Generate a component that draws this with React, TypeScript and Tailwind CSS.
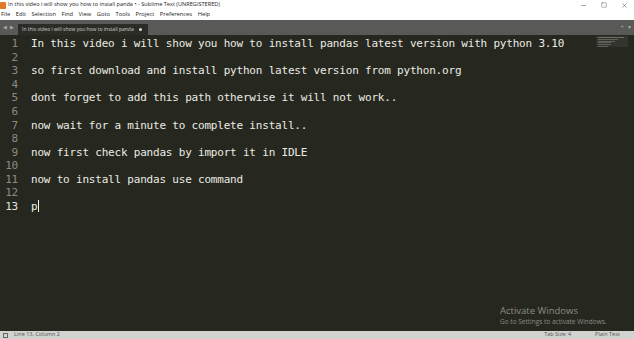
import { Minus, Square, X } from "lucide-react";

const lines = [
  "In this video i will show you how to install pandas latest version with python 3.10",
  "",
  "so first download and install python latest version from python.org",
  "",
  "dont forget to add this path otherwise it will not work..",
  "",
  "now wait for a minute to complete install..",
  "",
  "now first check pandas by import it in IDLE",
  "",
  "now to install pandas use command",
  "",
  "p",
];

const menu = ["File", "Edit", "Selection", "Find", "View", "Goto", "Tools", "Project", "Preferences", "Help"];

const ui = { fontFamily: '"Open Sans", "Noto Sans", sans-serif' };
const mono = { fontFamily: '"DejaVu Sans Mono", "Liberation Mono", monospace' };

export default function App() {
  return (
    <div className="w-[634px] h-[339px] flex flex-col overflow-hidden bg-[#26271f]" style={ui}>
      {/* title bar */}
      <div className="h-[10px] bg-white flex items-center relative">
        <div className="w-[6px] h-[7px] bg-[#e07a2a] rounded-[1px]" />
        <span className="ml-[2px] text-[5.6px] leading-none text-[#222] whitespace-nowrap">
          In this video i will show you how to install panda • - Sublime Text (UNREGISTERED)
        </span>
        <div className="ml-auto flex items-center gap-[14px] mr-[6px] text-[#333]">
          <Minus size={7} strokeWidth={1.5} />
          <Square size={6} strokeWidth={1.5} />
          <X size={7} strokeWidth={1.5} />
        </div>
      </div>

      {/* menu bar */}
      <div className="h-[10px] bg-white flex items-center pl-[1px] gap-[5.5px] text-[5.8px] leading-none text-[#222] whitespace-nowrap">
        {menu.map((m) => (
          <span key={m}>{m}</span>
        ))}
      </div>

      {/* tab bar */}
      <div className="h-[15px] bg-[#595958] flex items-end relative">
        <div className="absolute left-[3px] top-[4px] flex gap-[3px] text-[5px] text-[#aaa]">
          <span>◀</span>
          <span>▶</span>
        </div>
        <div className="ml-[18px] w-[130px] h-[11px] bg-[#2b2c25] flex items-center pl-[4px] text-[5px] text-[#cfcfcf] whitespace-nowrap">
          <span>In this video i will show you how to install panda</span>
          <span className="ml-auto mr-[6px] w-[3px] h-[3px] rounded-full bg-[#d8d8d8]" />
        </div>
        <div className="absolute right-[3px] top-[3px] flex gap-[4px] text-[6px] text-[#aaa]">
          <span>+</span>
          <span>▾</span>
        </div>
      </div>

      {/* editor */}
      <div className="flex-1 relative pt-[2px]" style={mono}>
        {lines.map((t, i) => (
          <div key={i} className="flex h-[13.55px] items-center text-[11px] leading-none tracking-[-0.2px]">
            <span className={`w-[18px] text-right ${i === 12 ? "text-[#e0e0da]" : "text-[#8a8b84]"}`}>{i + 1}</span>
            <span className="ml-[13px] text-[#ebebe5] whitespace-pre flex items-center">
              {t}
              {i === 12 && <span className="w-[1px] h-[12px] bg-[#f0f0ea] ml-[0.5px]" />}
            </span>
          </div>
        ))}

        {/* minimap */}
        <div className="absolute right-[6px] top-[1px] w-[32px] h-[11px] bg-[#33342d] flex flex-col gap-[1px] pt-[1px] pl-[2px]">
          <div className="w-[26px] h-[1px] bg-[#6c6d66]" />
          <div className="w-[20px] h-[1px] bg-[#5f605a]" />
          <div className="w-[17px] h-[1px] bg-[#5f605a]" />
          <div className="w-[13px] h-[1px] bg-[#5f605a]" />
          <div className="w-[13px] h-[1px] bg-[#5f605a]" />
          <div className="w-[10px] h-[1px] bg-[#5f605a]" />
        </div>

        {/* watermark */}
        <div className="absolute left-[500px] top-[271px] text-[#8c8d86] leading-none" style={ui}>
          <div className="text-[9.5px]">Activate Windows</div>
          <div className="text-[6.5px] mt-[3px]">Go to Settings to activate Windows.</div>
        </div>
      </div>

      {/* status bar */}
      <div className="h-[8px] bg-[#d2d2d0] flex items-center text-[5.5px] leading-none text-[#555]">
        <div className="ml-[3px] w-[5px] h-[5px] border border-[#666]" />
        <span className="ml-[6px]">Line 13, Column 2</span>
        <span className="ml-auto">Tab Size: 4</span>
        <span className="ml-[24px] mr-[14px]">Plain Text</span>
      </div>
    </div>
  );
}
